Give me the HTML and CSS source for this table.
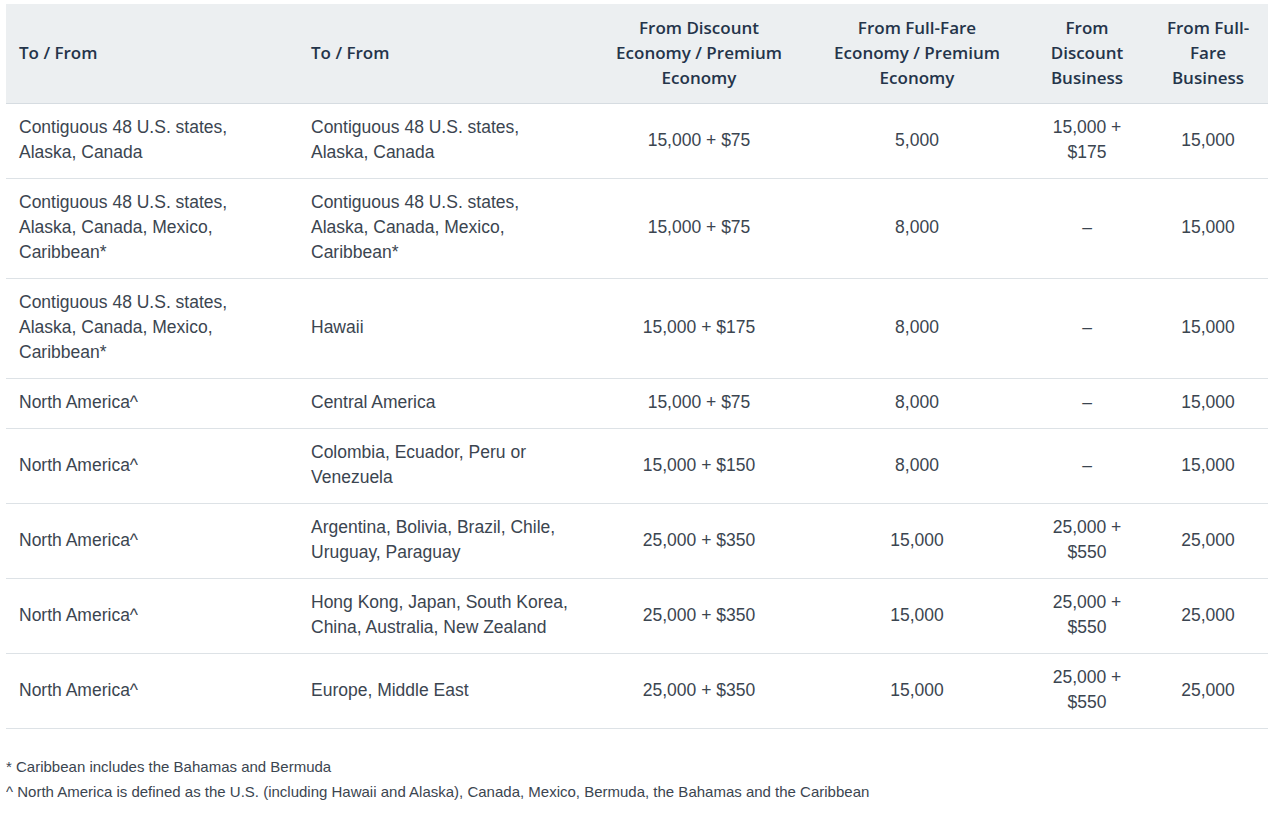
FILE: index.html
```html
<!DOCTYPE html>
<html lang="en">
<head>
<meta charset="utf-8">
<title>Award chart</title>
<link rel="stylesheet" href="styles.css">
</head>
<body>
<table class="chart">
  <colgroup>
    <col class="c1"><col class="c2"><col class="c3"><col class="c4"><col class="c5"><col class="c6">
  </colgroup>
  <thead>
    <tr>
      <th class="left">To / From</th>
      <th class="left">To / From</th>
      <th>From Discount Economy / Premium Economy</th>
      <th>From Full-Fare Economy / Premium Economy</th>
      <th>From Discount Business</th>
      <th>From Full-Fare Business</th>
    </tr>
  </thead>
  <tbody>
    <tr>
      <td class="left">Contiguous 48 U.S. states, Alaska, Canada</td>
      <td class="left">Contiguous 48 U.S. states, Alaska, Canada</td>
      <td>15,000 + $75</td><td>5,000</td><td>15,000 + $175</td><td>15,000</td>
    </tr>
    <tr>
      <td class="left">Contiguous 48 U.S. states, Alaska, Canada, Mexico, Caribbean*</td>
      <td class="left">Contiguous 48 U.S. states, Alaska, Canada, Mexico, Caribbean*</td>
      <td>15,000 + $75</td><td>8,000</td><td>–</td><td>15,000</td>
    </tr>
    <tr>
      <td class="left">Contiguous 48 U.S. states, Alaska, Canada, Mexico, Caribbean*</td>
      <td class="left">Hawaii</td>
      <td>15,000 + $175</td><td>8,000</td><td>–</td><td>15,000</td>
    </tr>
    <tr>
      <td class="left">North America^</td>
      <td class="left">Central America</td>
      <td>15,000 + $75</td><td>8,000</td><td>–</td><td>15,000</td>
    </tr>
    <tr>
      <td class="left">North America^</td>
      <td class="left">Colombia, Ecuador, Peru or Venezuela</td>
      <td>15,000 + $150</td><td>8,000</td><td>–</td><td>15,000</td>
    </tr>
    <tr>
      <td class="left">North America^</td>
      <td class="left">Argentina, Bolivia, Brazil, Chile, Uruguay, Paraguay</td>
      <td>25,000 + $350</td><td>15,000</td><td>25,000 + $550</td><td>25,000</td>
    </tr>
    <tr>
      <td class="left">North America^</td>
      <td class="left">Hong Kong, Japan, South Korea, China, Australia, New Zealand</td>
      <td>25,000 + $350</td><td>15,000</td><td>25,000 + $550</td><td>25,000</td>
    </tr>
    <tr>
      <td class="left">North America^</td>
      <td class="left">Europe, Middle East</td>
      <td>25,000 + $350</td><td>15,000</td><td>25,000 + $550</td><td>25,000</td>
    </tr>
  </tbody>
</table>
<div class="notes">
  <p>* Caribbean includes the Bahamas and Bermuda</p>
  <p>^ North America is defined as the U.S. (including Hawaii and Alaska), Canada, Mexico, Bermuda, the Bahamas and the Caribbean</p>
</div>
</body>
</html>
```
FILE: styles.css
```css
html, body {
  background: #ffffff;
}
body {
  margin: 4px 6px;
  font-family: "Liberation Sans", Arial, sans-serif;
  color: #3b4550;
}
.chart {
  width: 1262px;
  border-collapse: collapse;
  table-layout: fixed;
}
.c1 { width: 292px; }
.c2 { width: 292px; }
.c3 { width: 218px; }
.c4 { width: 218px; }
.c5 { width: 122px; }
.c6 { width: 120px; }
.chart th {
  background: #eceff1;
  font-family: "Open Sans", "Noto Sans", sans-serif;
  font-weight: 600;
  font-size: 17px;
  line-height: 25px;
  color: #24344a;
  padding: 11px 13px 13px;
  text-align: center;
  vertical-align: middle;
  border-bottom: 1px solid #d6dce1;
}
.chart td {
  font-size: 17.5px;
  line-height: 25px;
  padding: 11px 13px 13px;
  text-align: center;
  vertical-align: middle;
  border-bottom: 1px solid #dde2e6;
}
.chart .left {
  text-align: left;
}
.notes {
  margin-top: 25px;
  font-size: 15px;
  line-height: 25px;
  color: #3b4550;
}
.notes p {
  margin: 0;
}
```
